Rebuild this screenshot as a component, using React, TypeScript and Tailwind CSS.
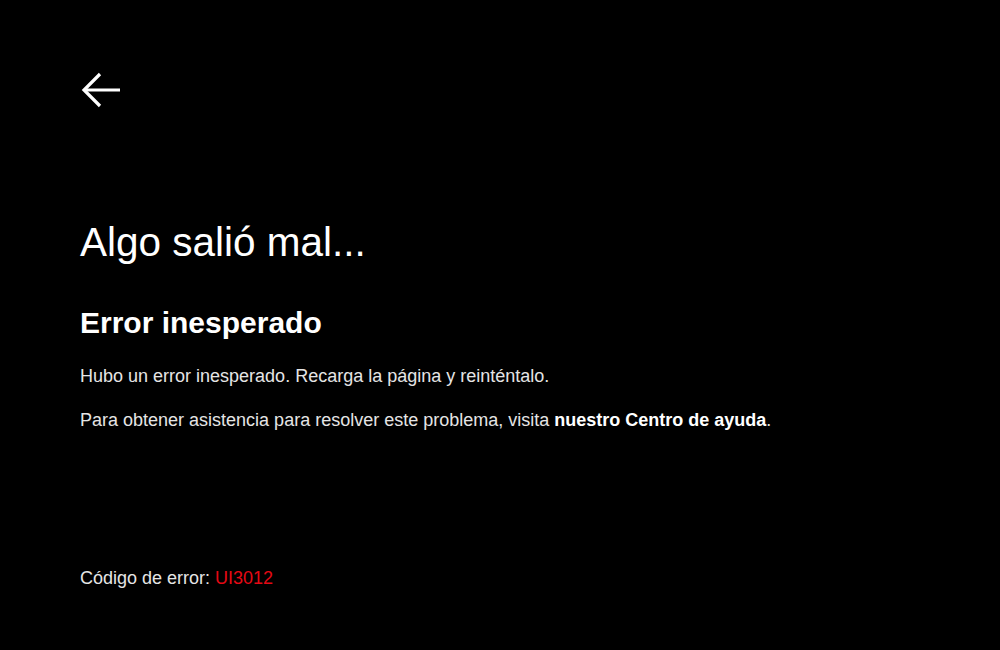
export default function App() {
  return (
    <div className="flex h-[650px] w-full flex-col bg-black px-[80px] text-white [font-family:'Liberation_Sans',Arial,sans-serif]">
      <div className="pt-[72px]">
        <button type="button" aria-label="Volver" className="block">
          <svg width="40" height="36" viewBox="0 0 40 36" fill="none" stroke="white" strokeWidth="3.2" strokeLinecap="butt">
            <path d="M40 18H5" />
            <path d="M20 2L4 18l16 16" />
          </svg>
        </button>
      </div>
      <h1 className="mt-[110px] text-[40.5px] leading-[48px] font-normal">Algo salió mal...</h1>
      <h2 className="mt-[39px] text-[30px] leading-[36px] font-bold">Error inesperado</h2>
      <p className="mt-[23px] text-[18px] leading-[24px] text-[#e5e5e5]">
        Hubo un error inesperado. Recarga la página y reinténtalo.
      </p>
      <p className="mt-[20px] text-[18px] leading-[24px] text-[#e5e5e5]">
        Para obtener asistencia para resolver este problema, visita{" "}
        <a href="#" className="font-bold text-white">
          nuestro Centro de ayuda
        </a>
        .
      </p>
      <p className="mt-[134px] text-[18px] leading-[24px] text-[#e5e5e5]">
        Código de error: <span className="text-[#e50914]">UI3012</span>
      </p>
    </div>
  );
}
